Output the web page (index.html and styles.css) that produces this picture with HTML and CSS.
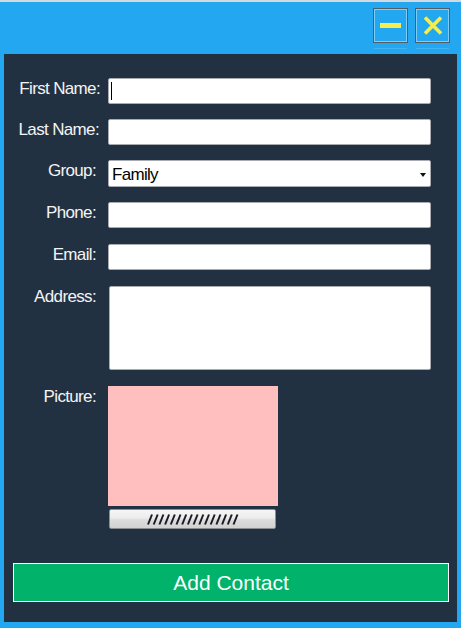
FILE: index.html
```html
<!DOCTYPE html>
<html lang="en">
<head>
<meta charset="utf-8">
<title>Add Contact</title>
<link rel="stylesheet" href="styles.css">
</head>
<body>
<div class="window">
  <header class="titlebar">
    <button class="winbtn" type="button" aria-label="Minimize">
      <span class="minus"></span>
    </button>
    <button class="winbtn" type="button" aria-label="Close">
      <svg class="cross" width="20" height="19" viewBox="0 0 20 19">
        <path d="M2 1.5 L18 17.5 M18 1.5 L2 17.5" stroke="#f6ee4c" stroke-width="3.6" fill="none"/>
      </svg>
    </button>
  </header>
  <main class="panel">
    <form class="form">
      <label class="label wide1">First Name:</label>
      <div class="field"><span class="caret"></span></div>

      <label class="label wide2">Last Name:</label>
      <div class="field"></div>

      <label class="label">Group:</label>
      <div class="field select"><span class="select-text">Family</span><span class="arrow"></span></div>

      <label class="label">Phone:</label>
      <div class="field"></div>

      <label class="label nudge">Email:</label>
      <div class="field nudge"></div>

      <label class="label nudge">Address:</label>
      <div class="field area nudge"></div>

      <label class="label nudge">Picture:</label>
      <div class="picture nudge">
        <div class="photo"></div>
        <div class="browse">
          <svg width="92" height="11" viewBox="0 0 92 11">
            <g stroke="#1b1b24" stroke-width="2" fill="none">
              <path d="M1 10.5 L5 0.5"/><path d="M6.7 10.5 L10.7 0.5"/><path d="M12.4 10.5 L16.4 0.5"/><path d="M18.1 10.5 L22.1 0.5"/>
              <path d="M23.8 10.5 L27.8 0.5"/><path d="M29.5 10.5 L33.5 0.5"/><path d="M35.2 10.5 L39.2 0.5"/><path d="M40.9 10.5 L44.9 0.5"/>
              <path d="M46.6 10.5 L50.6 0.5"/><path d="M52.3 10.5 L56.3 0.5"/><path d="M58 10.5 L62 0.5"/><path d="M63.7 10.5 L67.7 0.5"/>
              <path d="M69.4 10.5 L73.4 0.5"/><path d="M75.1 10.5 L79.1 0.5"/><path d="M80.8 10.5 L84.8 0.5"/><path d="M86.5 10.5 L90.5 0.5"/>
            </g>
          </svg>
        </div>
      </div>
    </form>
    <button class="submit" type="button">Add Contact</button>
  </main>
</div>
</body>
</html>
```

FILE: styles.css
```css
html, body {
  margin: 0;
  padding: 0;
}

body {
  width: 461px;
  height: 628px;
  overflow: hidden;
  background: #22a7f0;
  font-family: "Liberation Sans", Arial, sans-serif;
}

.window {
  box-sizing: border-box;
  width: 461px;
  height: 628px;
  display: flex;
  flex-direction: column;
  padding: 0 4px 6px 4px;
  border-top: 2px solid #d2dae0;
}

.titlebar {
  height: 52px;
  flex: none;
  display: flex;
  justify-content: flex-end;
  align-items: flex-start;
  gap: 7px;
  padding: 6px 7px 0 0;
  box-sizing: border-box;
}

.winbtn {
  position: relative;
  width: 35px;
  height: 35px;
  margin: 0;
  padding: 0;
  box-sizing: border-box;
  border: 1px solid #585c60;
  background: #22a7f0;
  box-shadow: inset 0 0 0 1px #7fcdf6;
  display: flex;
  align-items: center;
  justify-content: center;
  cursor: pointer;
}

.winbtn::after {
  content: "";
  position: absolute;
  left: 0;
  right: 0;
  top: 39px;
  height: 1px;
  background: rgba(255, 255, 255, 0.14);
}

.minus {
  display: block;
  width: 21px;
  height: 5px;
  background: #f6ee4c;
}

.cross {
  display: block;
}

.panel {
  flex: 1;
  background: #223142;
  padding: 24px 0 0 4px;
  display: flex;
  flex-direction: column;
}

.form {
  display: grid;
  grid-template-columns: 88px 323px;
  column-gap: 12px;
  row-gap: 15px;
  align-items: start;
}

.label {
  color: #f4f4f4;
  font-size: 17px;
  letter-spacing: -0.65px;
  line-height: 19px;
  text-align: right;
  padding-top: 1px;
  white-space: nowrap;
}

.wide1 {
  margin-right: -4px;
}

.wide2 {
  margin-right: -3px;
}

.nudge {
  margin-top: 1px;
}

.field {
  box-sizing: border-box;
  height: 26px;
  background: #ffffff;
  border: 1px solid #a9abb0;
  border-radius: 2px;
  display: flex;
  align-items: center;
  padding: 0 3px 0 2px;
}

.caret {
  display: block;
  width: 1px;
  height: 18px;
  background: #000000;
}

.select {
  height: 27px;
  justify-content: space-between;
  padding: 0 4px 0 3px;
}

.select-text {
  color: #000000;
  font-size: 17px;
  letter-spacing: -0.7px;
  line-height: 19px;
  padding-top: 1px;
}

.arrow {
  width: 0;
  height: 0;
  border-left: 3.5px solid transparent;
  border-right: 3.5px solid transparent;
  border-top: 4px solid #111111;
  margin-top: 2px;
}

.area {
  height: 84px;
  margin-left: 1px;
}

.picture {
  display: flex;
  flex-direction: column;
  align-items: flex-start;
}

.photo {
  width: 170px;
  height: 120px;
  background: #ffbfbf;
}

.browse {
  box-sizing: border-box;
  width: 167px;
  height: 20px;
  margin: 3px 0 0 1px;
  border: 1px solid #8c8e92;
  border-radius: 2px;
  background: linear-gradient(#f6f6f6 0%, #ececec 45%, #dcdcdc 55%, #d2d2d2 100%);
  display: flex;
  align-items: center;
  justify-content: center;
}

.browse svg {
  display: block;
}

.submit {
  box-sizing: border-box;
  width: 436px;
  height: 39px;
  margin: 34px 0 0 5px;
  padding: 0;
  border: 1px solid #ffffff;
  background: #00b26a;
  color: #ffffff;
  font-family: "Liberation Sans", Arial, sans-serif;
  font-size: 21px;
  line-height: 37px;
  text-align: center;
  cursor: pointer;
}
```
